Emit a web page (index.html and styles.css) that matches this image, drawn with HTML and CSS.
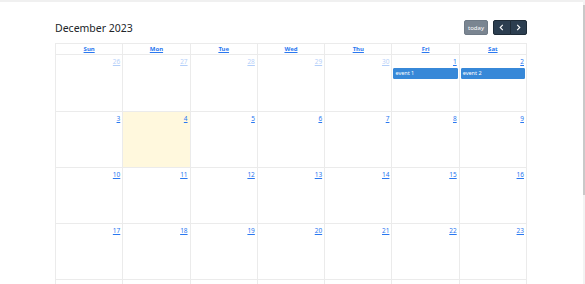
FILE: index.html
```html
<!DOCTYPE html>
<html>
<head>
<meta charset="utf-8">
<link rel="stylesheet" href="styles.css">
</head>
<body>
<div class="scrollbar"><div class="thumb"></div></div>
<div class="page">
  <div class="cal">
    <div class="toolbar">
      <h2 class="title">December 2023</h2>
      <div class="btns">
        <button class="btn today">today</button>
        <div class="group">
          <button class="btn nav"><svg width="5" height="7" viewBox="0 0 5 7"><path d="M3.8 0.8 L1.2 3.5 L3.8 6.2" fill="none" stroke="#fff" stroke-width="1.1"/></svg></button>
          <button class="btn nav"><svg width="5" height="7" viewBox="0 0 5 7"><path d="M1.2 0.8 L3.8 3.5 L1.2 6.2" fill="none" stroke="#fff" stroke-width="1.1"/></svg></button>
        </div>
      </div>
    </div>
    <div class="grid">
      <div class="hd"><a>Sun</a></div><div class="hd"><a>Mon</a></div><div class="hd"><a>Tue</a></div><div class="hd"><a>Wed</a></div><div class="hd"><a>Thu</a></div><div class="hd"><a>Fri</a></div><div class="hd"><a>Sat</a></div>

      <div class="day other"><a class="num">26</a></div>
      <div class="day other"><a class="num">27</a></div>
      <div class="day other"><a class="num">28</a></div>
      <div class="day other"><a class="num">29</a></div>
      <div class="day other"><a class="num">30</a></div>
      <div class="day"><a class="num">1</a><div class="event">event 1</div></div>
      <div class="day"><a class="num">2</a><div class="event">event 2</div></div>

      <div class="day"><a class="num">3</a></div>
      <div class="day today-cell"><a class="num">4</a></div>
      <div class="day"><a class="num">5</a></div>
      <div class="day"><a class="num">6</a></div>
      <div class="day"><a class="num">7</a></div>
      <div class="day"><a class="num">8</a></div>
      <div class="day"><a class="num">9</a></div>

      <div class="day"><a class="num">10</a></div>
      <div class="day"><a class="num">11</a></div>
      <div class="day"><a class="num">12</a></div>
      <div class="day"><a class="num">13</a></div>
      <div class="day"><a class="num">14</a></div>
      <div class="day"><a class="num">15</a></div>
      <div class="day"><a class="num">16</a></div>

      <div class="day"><a class="num">17</a></div>
      <div class="day"><a class="num">18</a></div>
      <div class="day"><a class="num">19</a></div>
      <div class="day"><a class="num">20</a></div>
      <div class="day"><a class="num">21</a></div>
      <div class="day"><a class="num">22</a></div>
      <div class="day"><a class="num">23</a></div>

      <div class="day"></div><div class="day"></div><div class="day"></div><div class="day"></div><div class="day"></div><div class="day"></div><div class="day"></div>
    </div>
  </div>
</div>
</body>
</html>
```

FILE: styles.css
```css
html, body {
  margin: 0;
  padding: 0;
  overflow: hidden;
  background: #fff;
}
body {
  border-top: 2px solid #f0f0f0;
  font-family: "Noto Sans", "Open Sans", sans-serif;
  color: #212529;
}
.scrollbar {
  position: fixed;
  top: 0;
  right: 0;
  width: 2px;
  height: 100%;
  background: #f3f3f3;
}
.thumb {
  margin-top: 5px;
  height: 190px;
  background: #c9c9c9;
}
.page {
  padding: 17px 58px 0 55px;
}
.cal {
  width: 472px;
}
.toolbar {
  display: flex;
  justify-content: space-between;
  align-items: center;
  height: 16px;
  margin-bottom: 8px;
}
.title {
  margin: 0;
  font-size: 10.5px;
  font-weight: 400;
  line-height: 16px;
  padding-top: 1px;
}
.btns {
  display: flex;
  gap: 5px;
  align-items: center;
  padding-top: 1px;
}
.btn {
  font-family: inherit;
  height: 15px;
  border: 1px solid #1e2b37;
  background: #2c3e50;
  color: #fff;
  padding: 0;
  font-size: 6px;
  border-radius: 2px;
  display: flex;
  align-items: center;
  justify-content: center;
}
.today {
  width: 24px;
  background: #7a8591;
  border-color: #6f7a86;
}
.group {
  display: flex;
}
.nav {
  width: 17.5px;
}
.group .nav:first-child {
  border-radius: 2px 0 0 2px;
}
.group .nav:last-child {
  border-radius: 0 2px 2px 0;
  margin-left: -1px;
}
.grid {
  display: grid;
  grid-template-columns: repeat(7, 1fr);
  grid-template-rows: 11px 57px repeat(4, 56px);
  border-top: 1px solid #ebebeb;
  border-left: 1px solid #ebebeb;
}
.hd, .day {
  border-right: 1px solid #ebebeb;
  border-bottom: 1px solid #ebebeb;
}
.hd {
  text-align: center;
  font-size: 6px;
  font-weight: 700;
  line-height: 10px;
}
a {
  color: #2a78f0;
  text-decoration: underline;
}
.day {
  display: flex;
  flex-direction: column;
  align-items: flex-end;
}
.num {
  font-size: 6.5px;
  line-height: 10px;
  padding: 2px 2px 0 0;
}
.other .num {
  opacity: 0.35;
}
.today-cell {
  background: #fff8dd;
}
.event {
  align-self: stretch;
  margin: 1px 1px 0 1px;
  height: 9px;
  background: #3788d8;
  border: 1px solid #3788d8;
  border-radius: 1px;
  color: #fff;
  font-size: 5.5px;
  line-height: 9px;
  padding-left: 1px;
}
```
